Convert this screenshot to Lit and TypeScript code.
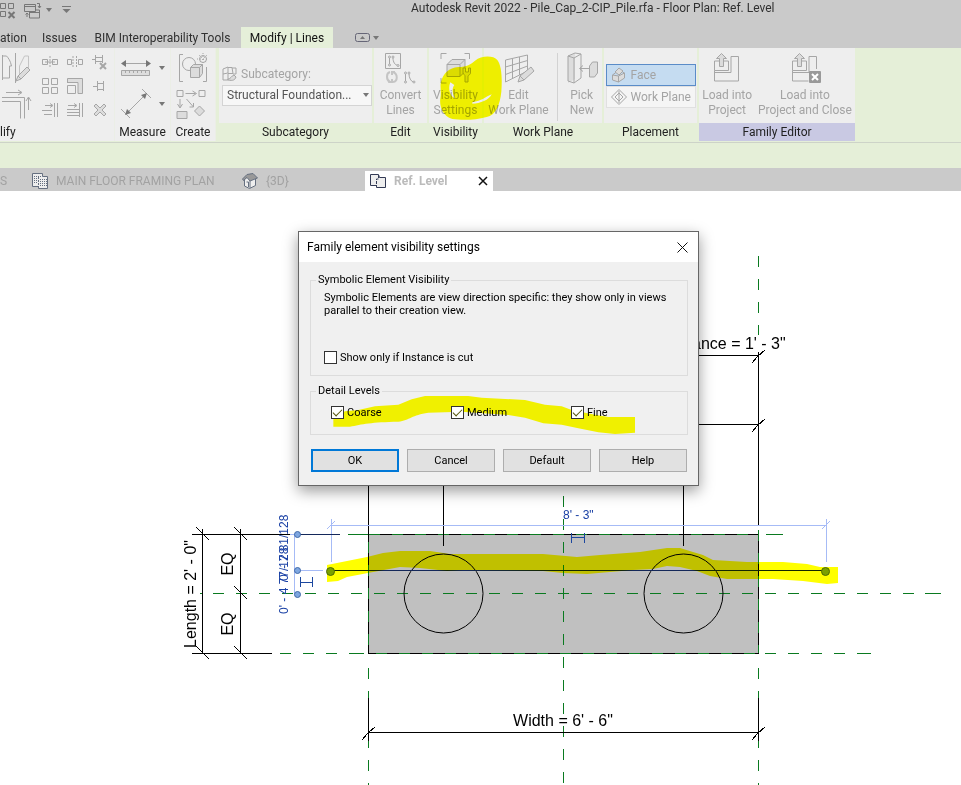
import { LitElement, html, svg, css, type TemplateResult } from "lit";
import { customElement } from "lit/decorators.js";

type Glyph = { w: number; h: number; art: TemplateResult };

const GLYPHS: Record<string, Glyph> = {
  grid: { w: 16, h: 18, art: svg`
    <path d="M0.5 2.5h5v5h-5zM8.5 2.5h5v5h-5zM0.5 10.5h5v5h-5z"/><path class="heavy" d="M8.5 11l6 6M14.5 11l-6 6"/>` },
  windows: { w: 18, h: 18, art: svg`
    <path d="M0.5 3.5h11v7h-11zM0.5 5.5h11M5.5 10v7h10v-8h-4M6 11.5h10M13 2.5h2.500v4M14 5l1.500 2l1.500-2M3 12v4M1.500 13.500L3 12l1.500 1.500"/>` },
  caret: { w: 6, h: 4, art: svg`<path class="solid" d="M0 0h6L3 4z"/>` },
  overflow: { w: 9, h: 8, art: svg`<path d="M0 0.500h9"/><path class="solid" d="M0.500 3h8L4.500 7z"/>` },
  collapse: { w: 16, h: 10, art: svg`<rect x="0.500" y="0.500" width="14" height="8" rx="2"/><path class="solid" d="M5 6h5L7.500 3z"/>` },
  mirror: { w: 30, h: 30, art: svg`
    <path d="M2.500 2v25M2.500 3h4c2 2 4 5 5 10l-2 0v12h-7zM15.500 0v30"/><path class="faint" d="M28.500 3h-4l-5 10v8M28.500 3v12"/>
    <path class="face" d="M16 28l2-5l9-9l3 3l-9 9z"/><path d="M18 23l3 3"/>` },
  trim: { w: 30, h: 30, art: svg`
    <path d="M6 3.500h15M18 1l4 2.500l-4 2.500M2 8.500h22.500v21M2 12.500h18.500v17M28.500 21v-12M26 12l2.500-4l2.500 4"/>` },
  splitA: { w: 16, h: 12, art: svg`<path d="M0.500 3.500h5v5h-5zM10.500 3.500h5v5h-5zM3 6h10"/><path stroke-dasharray="2 1" d="M8 0v12"/>` },
  splitB: { w: 16, h: 12, art: svg`<path d="M0.500 3.500h4v5h-4zM11.500 3.500h4v5h-4z"/><path stroke-dasharray="2 1" d="M6 0v12M9.500 0v12"/>` },
  unpin: { w: 16, h: 15, art: svg`<path d="M0 4.500h3M3.500 0v9M3.500 2.500h7v4h-7M10.500 0v8"/><path class="heavy" d="M8 8l6 6M14 8l-6 6"/>` },
  array: { w: 16, h: 16, art: svg`<path d="M0.500 0.500h6v6h-6zM9.500 0.500h6v6h-6zM0.500 9.500h6v6h-6zM9.500 9.500h6v6h-6z"/>` },
  scale: { w: 16, h: 16, art: svg`<path class="fillgray" d="M1 1h14v14h-4V5H1z"/><path d="M0.500 7.500h8v8h-8zM0.500 5v-4.500h15v15h-4.500v-11H0.500"/>` },
  pin: { w: 14, h: 12, art: svg`<path d="M0 6.500h4M4.500 1v10M4.500 3.500h6v6h-6M10.500 1v10"/>` },
  alignA: { w: 16, h: 14, art: svg`<path d="M3 2.500h7M8 0.500l3 2l-3 2M12.500 0v14M15.500 0v14M0 7.500h10M2 11.500h8"/>` },
  alignB: { w: 16, h: 14, art: svg`<path d="M1 2.500h8M7 0.500l3 2l-3 2M12.500 0v14M15.500 0v14M0 6.500h12M0 9.500h12M0 12.500h12"/>` },
  erase: { w: 14, h: 14, art: svg`<path class="face" d="M1 3l2-2l4 4l4-4l2 2l-4 4l4 4l-2 2l-4-4l-4 4l-2-2l4-4z"/>` },
  ruler: { w: 30, h: 18, art: svg`
    <path d="M2 4.500h26"/><path class="solid" d="M0 4.500l5-3.500v7zM30 4.500l-5-3.500v7z"/><path class="fillgray" d="M0.500 11.500h28v5h-28z"/><path d="M0.500 11.500h28v5h-28zM4.500 12v2M8.500 12v2M12.500 12v2M16.500 12v2M20.500 12v2M24.500 12v2"/>` },
  dimension: { w: 30, h: 30, art: svg`
    <path d="M5 25L25 5M21 0l9 9M0 20l9 9"/><path class="solid" d="M4 26l2-6l4 4zM26 4l-6 2l4 4z"/>` },
  group: { w: 30, h: 30, art: svg`
    <path d="M5 1.500H1.500v27H5M25 28.500h3.500V14"/><circle cx="11" cy="11" r="6.500"/><path class="face" d="M12.500 14.500l3-3h9v9l-3 4h-9zM12.500 14.500h9v10M21.500 14.500l3-3"/>
    <circle cx="25" cy="6" r="3.500"/><path stroke-dasharray="1 2" d="M25 0v12M19 6h12M21 2l8 8M29 2l-8 8"/>` },
  create: { w: 30, h: 30, art: svg`
    <path d="M0.500 1.500h6v6h-6zM22.500 1.500h6v6h-6zM9 4.500h10M16 2l4 2.500l-4 2.500M3.500 10v8M1 15l2.500 4l2.500-4M10 10l7 8M17 14v4h-4"/>
    <path class="face" d="M0.500 22.500h10v7h-10zM23 17l5 5l-5 5l-5-5z"/>` },
  category: { w: 16, h: 16, art: svg`
    <path d="M1 3l5-2v6l-5 1zM6 1.500h4l1 6H6M10 2l4 0v6h-3M1 8v6h5V8"/><path class="face" d="M6 13c3 0 3-3 6-4l2 2c-1 3-3 4-8 3z"/>` },
  convert: { w: 32, h: 32, art: svg`
    <path d="M1.500 0.500h15v15h-15zM5.500 5v6M9 5c0 4 2 7 4 7"/><circle cx="5.500" cy="4" r="1"/><circle cx="5.500" cy="12" r="1"/><circle cx="9" cy="4" r="1"/><circle cx="14" cy="12.500" r="1"/>
    <path class="heavy faint" d="M6 19c-4 1-4 8 0 10M9 29c5-1 5-8 0-10M4 29h4v-3M11 19H8v3"/>
    <path d="M21.500 21v7M25 21c0 4 2 7 4 8"/><circle cx="21.500" cy="20" r="1"/><circle cx="21.500" cy="29" r="1"/><circle cx="25" cy="20" r="1"/><circle cx="30" cy="29" r="1"/>` },
  visibility: { w: 32, h: 32, art: svg`
    <path d="M1.500 6V0.500H7M25 0.500h5V6M1.500 25v5H7"/><path class="face" d="M7.500 11.500l5-5h13v12l-5 5h-13zM7.500 11.500h13v12M20.500 11.500l5-5"/>
    <path class="face" d="M23.500 15v5c1 2 2 2 2 3v6h3v-6c0-1 3-1 2.500-4v-4l-2 0v4h-3v-4z"/>` },
  workplane: { w: 32, h: 32, art: svg`
    <path d="M3.500 7L25.500 2v16L3.500 29zM10.500 5.500v20M17.500 4v18M3.500 14L25.500 7.500M3.500 21.500L25.500 13"/><path class="face" d="M16 29l2-6l11-9l3 4l-10 9z"/><path d="M18 23l4 4"/>` },
  pick: { w: 32, h: 32, art: svg`
    <path class="fillgray" d="M2 3l7-3v26l-7 4z"/><path d="M2 3l7-3l6 1v24l-7 5l-6-2zM2 3l6 2v25M8 5l7-4M23 15.500h-9M17 12.500l-3.500 3l3.500 3"/><path class="face" d="M23.500 13l3-4h5v11l-3 4h-5z"/>` },
  face: { w: 16, h: 16, art: svg`
    <path class="face" d="M1.500 8v5l6 2l6-4V6l-6 3z"/><path d="M1.500 8l4-3M13.500 6l-2-1M7.500 9v6"/><path class="face" d="M4 5l4-4l4 3l-4 4z"/>` },
  plane: { w: 16, h: 16, art: svg`
    <path d="M8 0.500L15.500 8L8 15.500L0.500 8z"/><path d="M8 4l4 4l-4 4l-4-4z"/><path d="M8 2v12"/>` },
  load: { w: 32, h: 32, art: svg`
    <path d="M9 8H3.500v9.500h14V8H13M3.500 17.500v10.500h24V3.500H20v16H3.500"/><path class="face" d="M10.500 0.500l5 5h-3v8h-4v-8h-3z"/>` },
  loadClose: { w: 32, h: 32, art: svg`
    <path d="M9 8H3.500v9.500h14V8H13M3.500 17.500v10.500h16M27.500 16V3.500H20v16H3.500"/><path class="face" d="M10.500 0.500l5 5h-3v8h-4v-8h-3z"/>
    <rect class="badge" x="20" y="18" width="12" height="12" rx="1"/><path class="cross" d="M23 21l6 6M29 21l-6 6"/>` },
  sheet: { w: 16, h: 16, art: svg`
    <path class="paper" d="M0.500 0.500h10v3h5v12h-9v-2h-6z"/><path stroke-dasharray="1 1" d="M2 3.500h7M2 5.500h5M2 7.500h4M2 9.500h4M8.500 6v8M10.500 6v8M12.500 6v8M14.500 6v8"/><path stroke-dasharray="2 1" d="M6.500 4v10"/>` },
  house: { w: 16, h: 16, art: svg`
    <path class="paper" d="M2.500 6v7l5 2.500l6-3V6L9 1z"/><path class="roof" d="M0.500 6L5 1.500L11 0.500L15.500 5L8 8L5 4.500L1.500 7.500z"/><path d="M8 8v7M4.500 9h2v5"/>` },
  plan: { w: 16, h: 15, art: svg`
    <path class="paper" d="M0.500 0.500h8l1 3h6v10h-9v-2h-6z"/><path stroke-dasharray="3 1" d="M8.500 1v4h-2v7"/>` },
};

const icon = (name: string) => {
  const g = GLYPHS[name];
  return html`<svg class="icon ${name}" width=${g.w} height=${g.h} viewBox="0 0 ${g.w} ${g.h}" aria-hidden="true">${g.art}</svg>`;
};

const tick = (x: number, y: number, flip = false) =>
  svg`<path class="ink" d=${flip ? `M${x - 6} ${y - 7}l13 13` : `M${x - 6} ${y + 8}l6-7l7-6`}/>`;

const iconButton = (name: string, label: string) =>
  html`<button class="tool" aria-label=${label}>${icon(name)}</button>`;

const bigButton = (name: string, first: string, second: string) => html`
  <button class="big">${icon(name)}<span>${first}<br />${second}</span></button>`;

@customElement("revit-dialog")
export class RevitDialog extends LitElement {
  static styles = css`
    :host { display: block; box-sizing: border-box; width: 401px; background: #f0f0f0; border: 1px solid #666;
      box-shadow: 0 5px 14px rgba(0, 0, 0, 0.4); font: 11px/13px Roboto, "Noto Sans", sans-serif; color: #000; }
    header { display: flex; justify-content: space-between; align-items: center; height: 30px; padding: 0 8px; background: #fff; }
    h1 { margin: 0; font-size: 12px; font-weight: 400; }
    .close { display: flex; padding: 2px; border: 0; background: none; }
    .close svg { stroke: #111; fill: none; }
    .body { position: relative; padding: 11px 10px 13px 11px; }
    fieldset { margin: 0; padding: 4px 13px 10px; border: 1px solid #dcdcdc; min-width: 0; }
    legend { margin-left: -8px; padding: 0 2px; line-height: 14px; }
    p { margin: 0 0 33px; }
    .levels { display: grid; grid-template-columns: repeat(3, 120px); margin-top: 8px; padding: 7px 20px 14px; }
    .levels legend { margin-left: -15px; }
    label { display: flex; align-items: center; gap: 3px; line-height: 15px; position: relative; }
    input { appearance: none; box-sizing: border-box; width: 13px; height: 13px; margin: 0; border: 1px solid #333; background: #fff; }
    input:checked::after { content: ""; display: block; box-sizing: border-box; width: 5px; height: 9px; margin: 0 3px;
      border: solid #55550c; border-width: 0 1px 1px 0; transform: rotate(45deg); }
    .actions { display: grid; grid-template-columns: repeat(4, 88px); gap: 8px; margin: 14px 0 0 1px; }
    .actions button { height: 23px; padding: 0; font: inherit; color: inherit; background: #e1e1e1; border: 1px solid #adadad; }
    .actions .primary { border: 2px solid #0078d7; }
    .marker { position: absolute; left: -4px; top: 83px; pointer-events: none; mix-blend-mode: multiply; fill: #ff0; }
  `;

  render() {
    return html`
      <header>
        <h1>Family element visibility settings</h1>
        <button class="close" aria-label="Close"><svg width="11" height="11"><path d="M0.5 0.5l10 10M10.500 0.500l-10 10"/></svg></button>
      </header>
      <div class="body">
        <svg class="marker" width="410" height="150" viewBox="0 0 1230 450" aria-hidden="true">
          <path d="M115 217L115 245L165 245C200 238 230 231 310 230C345 225 350 210 400 203L500 200L640 210L690 218L745 235L800 239L850 250L910 262L960 267L1020 263V216H940L900 209L830 195L800 184L750 179L690 165L560 158L520 153H390L350 163L310 179L240 184L190 195L150 199Z"/>
        </svg>
        <fieldset>
          <legend>Symbolic Element Visibility</legend>
          <p>Symbolic Elements are view direction specific: they show only in views parallel to their creation view.</p>
          <label><input type="checkbox" />Show only if Instance is cut</label>
        </fieldset>
        <fieldset class="levels">
          <legend>Detail Levels</legend>
          ${["Coarse", "Medium", "Fine"].map((t) => html`<label><input type="checkbox" checked />${t}</label>`)}
        </fieldset>
        <div class="actions">
          <button class="primary">OK</button><button>Cancel</button><button>Default</button><button>Help</button>
        </div>
      </div>`;
  }
}

@customElement("plan-view")
export class PlanView extends LitElement {
  static styles = css`
    :host { display: block; position: relative; overflow: hidden; background: #fff; }
    .sheet { display: block; width: 100%; height: 100%; min-height: 594px; fill: none; isolation: isolate; }
    text { font-family: "Liberation Sans", Arial, sans-serif; font-size: 16px; fill: #000; }
    path { shape-rendering: crispEdges; }
    .ink { stroke: #000; }
    .ref { stroke: #0a7a20; stroke-dasharray: 11 12; }
    .short { stroke: #0a7a20; }
    .cap { fill: #c0c0c0; stroke: #000; }
    .temp { stroke: #a6bbf6; }
    .blue { stroke: #1c479f; }
    .navy { stroke: #14285a; }
    .note { font-size: 12px; fill: #1a41a5; }
    .dot { fill: #7ea6e0; stroke: #3f68a8; }
    .grip { fill: #7ba018; stroke: #4d6b16; }
    .marker { fill: #ff0; mix-blend-mode: multiply; shape-rendering: auto; }
    revit-dialog { position: absolute; left: 298px; top: 40px; }
  `;

  render() {
    return html`
      <svg class="sheet" role="img" aria-label="Pile cap plan">
        <g transform="translate(0 -191)">
          <rect class="cap" x="368.5" y="534.5" width="390" height="119"/>
          <path class="ref" d="M368.500 534.500H758"/>
          <path class="ref" d="M353 653.500H758"/>
          <path class="ref" d="M368.500 542V653"/>
          <path class="ref" d="M758.500 530V653"/>
          <path class="ref" d="M213 593.500H925"/>
          <path class="ref" d="M563.500 496V785"/>
          <path class="ref" d="M758.500 256V335M280 653.500H362M765 653.500H860M758.500 668V692M758.500 760V785M368.500 668V692M368.500 760V785"/>
          <path class="short" d="M200 593.500h3M925 593.500h16M348 534.500h20M766 534.500h17M857 653.500h14M758.500 691V748M368.500 691V748M758.500 530v5"/>
          <circle class="ink" cx="443.500" cy="593.500" r="39.500"/>
          <circle class="ink" cx="683.500" cy="593.500" r="39.500"/>
          <path class="ink" d="M368.500 480V535M443.500 480V546M683.500 480V546M758.500 352V526M690 355.500H759M690 424.500H759M368.500 698V741M758.500 698V741M368 732.500H759"/>
          <path class="ink" d="M192 534.500H340M192 653.500H272M202.500 529V654M240.500 529V654"/>
          ${[[758, 355], [758, 424], [758, 732], [368, 732]].map(([x, y]) => tick(x, y))}
          ${[[202, 534], [240, 534], [202, 653], [240, 653], [240, 593]].map(([x, y]) => tick(x, y, true))}
          <text x="692" y="349">ance = 1' - 3"</text>
          <text x="563" y="726" text-anchor="middle">Width = 6' - 6"</text>
          <text transform="translate(196 594) rotate(-90)" text-anchor="middle">Length = 2' - 0"</text>
          <text transform="translate(233 564) rotate(-90)" text-anchor="middle">EQ</text>
          <text transform="translate(233 624) rotate(-90)" text-anchor="middle">EQ</text>
          <path class="temp" d="M331 519V562M826 519V562M331 525H826M294.500 535V594M298 570.500H323M300 534.500H290M327 529l8-8M822 529l8-8"/>
          <path class="navy" d="M297 534.500H340M330 570.500H826"/>
          <path class="blue" d="M300.500 577v10M312.500 577v10M301 582.500h11M571.500 533v10M584.500 533v10M572 537.500h12"/>
          <text class="note" x="563" y="519">8' - 3"</text>
          <text class="note" transform="translate(288 614) rotate(-90)">0' - 4 77/128</text>
          <text class="note" transform="translate(288 581) rotate(-90)">0' - 7 81/128</text>
          ${[534.5, 570.5, 594.5].map((y) => svg`<circle class="dot" cx="297.500" cy=${y} r="3"/>`)}
          <circle class="grip" cx="330.500" cy="571.500" r="4"/><circle class="grip" cx="825.500" cy="571.500" r="4"/>
          <path class="marker" d="M327 565L337 563L367 557L383 553L400 551H430L450 554H543L577 557L600 555L640 552L667 548L680 548L693 552L703 555L713 560L747 562H783L807 564L820 567H838V583L827 584L803 581L773 579H727L710 576L697 571L680 567L667 566L653 569L633 570L587 574L563 573L543 571L463 570L447 571L420 568L400 567L368 573L347 577L338 581L327 582Z"/>
        </g>
      </svg>
      <revit-dialog role="dialog"></revit-dialog>`;
  }
}

@customElement("app-root")
export class AppRoot extends LitElement {
  static styles = css`
    :host { display: flex; flex-direction: column; min-height: 100vh; overflow: hidden; background: #cacaca;
      font: 12px/15px Roboto, "Noto Sans", sans-serif; color: #303030; }
    button, select { font: inherit; color: inherit; margin: 0; padding: 0; border: 0; background: none; border-radius: 0; }
    .icon { display: block; flex: none; fill: none; stroke: #a6a6a6; overflow: visible; }
    .solid { fill: #777; stroke: none; }
    .face { fill: #dcdcdc; }
    .faint { stroke: #c4c4c4; }
    .fillgray { fill: #ddd; stroke: none; }
    .heavy { stroke-width: 2; }
    .badge { fill: #999; stroke: none; }
    .cross { stroke: #fff; stroke-width: 2; }
    .paper { fill: #eee; }
    .roof { fill: #999; }

    .titlebar { display: flex; align-items: flex-start; height: 27px; white-space: nowrap; }
    .quick { display: flex; align-items: center; gap: 4px; width: 411px; flex: none; height: 20px; }
    .quick .icon { stroke: #777; }
    .quick .windows { margin-left: 4px; }
    .quick .overflow { margin-left: 6px; }
    .title { font-size: 12px; font-weight: 400; margin: 0; line-height: 16px; }
    .tabs { display: flex; height: 21px; white-space: nowrap; }
    .tabs button { line-height: 20px; }
    .tabs .first { width: 34px; padding-right: 10px; text-align: right; }
    .tabs .issues { width: 51px; }
    .tabs .bim { width: 155px; }
    .tabs .active { width: 92px; background: #e5efd9; color: #111; margin-left: 1px; }
    .tabs .mini { display: flex; align-items: center; gap: 2px; margin-left: 22px; }
    .mini .icon { stroke: #667; }

    .ribbon { display: flex; background: #e5efd8; border-bottom: 1px solid #cdd3c8; padding-bottom: 1px; white-space: nowrap; }
    .panel { display: flex; flex-direction: column; flex: none; position: relative; margin-right: 2px; }
    .panel > .content { display: flex; align-items: flex-start; justify-content: center; height: 75px; box-sizing: border-box; padding-top: 5px; background: #eee; color: #a4a4a4; }
    .panel > h2 { margin: 0; font-size: 12px; font-weight: 400; line-height: 18px; text-align: center; color: #222; }
    .plain { background: #eee; margin-right: 0; border-right: 1px solid #ebeee6; box-sizing: border-box; }
    .modify { width: 115px; }
    .panel.modify .content { justify-content: flex-start; gap: 7px; }
    .panel.modify h2 { text-align: left; }
    .measure { width: 56px; }
    .create { width: 45px; margin-right: 3px; }
    .subcategory { width: 153px; }
    .edit { width: 53px; }
    .visibility { width: 53px; }
    .work { width: 118px; }
    .placement { width: 93px; }
    .family { width: 156px; }
    .family h2 { background: #c9c9e3; }
    .stack { display: grid; gap: 6px; }
    .small { display: grid; grid-template-columns: repeat(3, 25px); grid-auto-rows: 24px; margin-top: -3px; }
    .tool { display: flex; align-items: center; justify-content: center; gap: 8px; }
    .measure .tool { height: 30px; }
    .big { display: flex; flex-direction: column; align-items: center; gap: 3px; line-height: 15px; }
    .work .content { gap: 8px; }
    .rule { width: 1px; height: 68px; background: #d2d2d2; }
    .panel.subcategory .content { flex-direction: column; justify-content: flex-start; gap: 3px; padding: 18px 0 0 3px; align-items: stretch; }
    .subcategory label { display: flex; align-items: center; gap: 3px; height: 16px; }
    .drop { position: relative; display: flex; }
    .drop select { appearance: none; width: 100%; height: 21px; padding: 0 4px; color: #555; background: #f7f7f7; border: 1px solid #d4d4d4; }
    .drop .icon { position: absolute; right: 3px; top: 8px; pointer-events: none; }
    .modes { display: grid; width: 90px; margin-top: 11px; }
    .modes button { display: flex; align-items: center; gap: 4px; height: 22px; padding: 0 4px; border: 1px solid #e0e0e0; background: #f5f5f5; }
    .modes .on { border-color: #5a8cc8; background: #c5dcf1; }
    .family .content { gap: 6px; }
    .marker { position: absolute; left: -4px; top: -3px; mix-blend-mode: multiply; fill: #ff0; pointer-events: none; z-index: 1; }
    .options { height: 25px; background: #e5efd8; }

    .docs { display: flex; align-items: flex-end; height: 23px; color: #a2a2a2; white-space: nowrap; }
    .docs button { display: flex; align-items: center; gap: 8px; height: 20px; }
    .docs .icon { stroke: #667080; }
    .docs .cut { width: 32px; }
    .docs .floor { width: 210px; }
    .docs .three { width: 123px; }
    .docs .current { display: flex; align-items: center; width: 128px; height: 20px; box-sizing: border-box; padding: 0 5px; background: #fff; justify-content: space-between; font-weight: 700; color: #bbb; }
    .current .icon { stroke: #333a55; }
    .current .x { stroke: #111; stroke-width: 1.5; fill: none; display: block; }
    plan-view { flex: 1; }
  `;

  render() {
    return html`
      <header class="titlebar">
        <div class="quick">${icon("grid")}${icon("windows")}${icon("caret")}${icon("overflow")}</div>
        <h1 class="title">Autodesk Revit 2022 - Pile_Cap_2-CIP_Pile.rfa - Floor Plan: Ref. Level</h1>
      </header>
      <nav class="tabs">
        <button class="first">ation</button><button class="issues">Issues</button><button class="bim">BIM Interoperability Tools</button>
        <button class="active">Modify | Lines</button>
        <button class="mini" aria-label="Minimize ribbon">${icon("collapse")}${icon("caret")}</button>
      </nav>
      <section class="ribbon">
        <div class="panel plain modify">
          <div class="content">
            <div class="stack">${iconButton("mirror", "Mirror")}${iconButton("trim", "Trim")}</div>
            <div class="small">
              ${[["splitA", "Split"], ["splitB", "Split with gap"], ["unpin", "Unpin"], ["array", "Array"], ["scale", "Scale"], ["pin", "Pin"],
                ["alignA", "Trim single"], ["alignB", "Trim multiple"], ["erase", "Delete"]].map(([n, l]) => iconButton(n, l))}
            </div>
          </div>
          <h2>lify</h2>
        </div>
        <div class="panel plain measure">
          <div class="content"><div class="stack">
            <button class="tool" aria-label="Measure">${icon("ruler")}${icon("caret")}</button>
            <button class="tool" aria-label="Dimension">${icon("dimension")}${icon("caret")}</button>
          </div></div>
          <h2>Measure</h2>
        </div>
        <div class="panel plain create">
          <div class="content"><div class="stack">${iconButton("group", "Create group")}${iconButton("create", "Create similar")}</div></div>
          <h2>Create</h2>
        </div>
        <div class="panel subcategory">
          <div class="content">
            <label for="sub">${icon("category")}Subcategory:</label>
            <div class="drop"><select id="sub"><option>Structural Foundation...</option></select>${icon("caret")}</div>
          </div>
          <h2>Subcategory</h2>
        </div>
        <div class="panel edit"><div class="content">${bigButton("convert", "Convert", "Lines")}</div><h2>Edit</h2></div>
        <div class="panel visibility">
          <div class="content">${bigButton("visibility", "Visibility", "Settings")}</div><h2>Visibility</h2>
          <svg class="marker" width="80" height="80" viewBox="0 0 240 240" aria-hidden="true">
            <path fill-rule="evenodd" d="M48 110C55 85 72 68 100 66C125 66 138 58 150 47C170 31 205 31 217 45C230 62 232 100 229 140C225 180 212 210 185 216C150 226 110 226 82 222C50 212 43 180 46 160C50 140 44 125 48 110ZM76 112C68 130 75 155 90 160C82 145 80 130 88 120ZM142 176C165 176 193 165 200 148C182 155 170 168 142 172Z"/>
          </svg>
        </div>
        <div class="panel work">
          <div class="content">${bigButton("workplane", "Edit", "Work Plane")}<span class="rule"></span>${bigButton("pick", "Pick", "New")}</div>
          <h2>Work Plane</h2>
        </div>
        <div class="panel placement">
          <div class="content"><div class="modes"><button class="on">${icon("face")}Face</button><button>${icon("plane")}Work Plane</button></div></div>
          <h2>Placement</h2>
        </div>
        <div class="panel family">
          <div class="content">${bigButton("load", "Load into", "Project")}${bigButton("loadClose", "Load into", "Project and Close")}</div>
          <h2>Family Editor</h2>
        </div>
      </section>
      <div class="options"></div>
      <nav class="docs">
        <button class="cut">S</button>
        <button class="floor">${icon("sheet")}MAIN FLOOR FRAMING PLAN</button>
        <button class="three">${icon("house")}{3D}</button>
        <div class="current">
          <button>${icon("plan")}Ref. Level</button>
          <button aria-label="Close view"><svg class="x" width="10" height="10"><path d="M1 1l8 8M9 1l-8 8"/></svg></button>
        </div>
      </nav>
      <plan-view></plan-view>`;
  }
}
